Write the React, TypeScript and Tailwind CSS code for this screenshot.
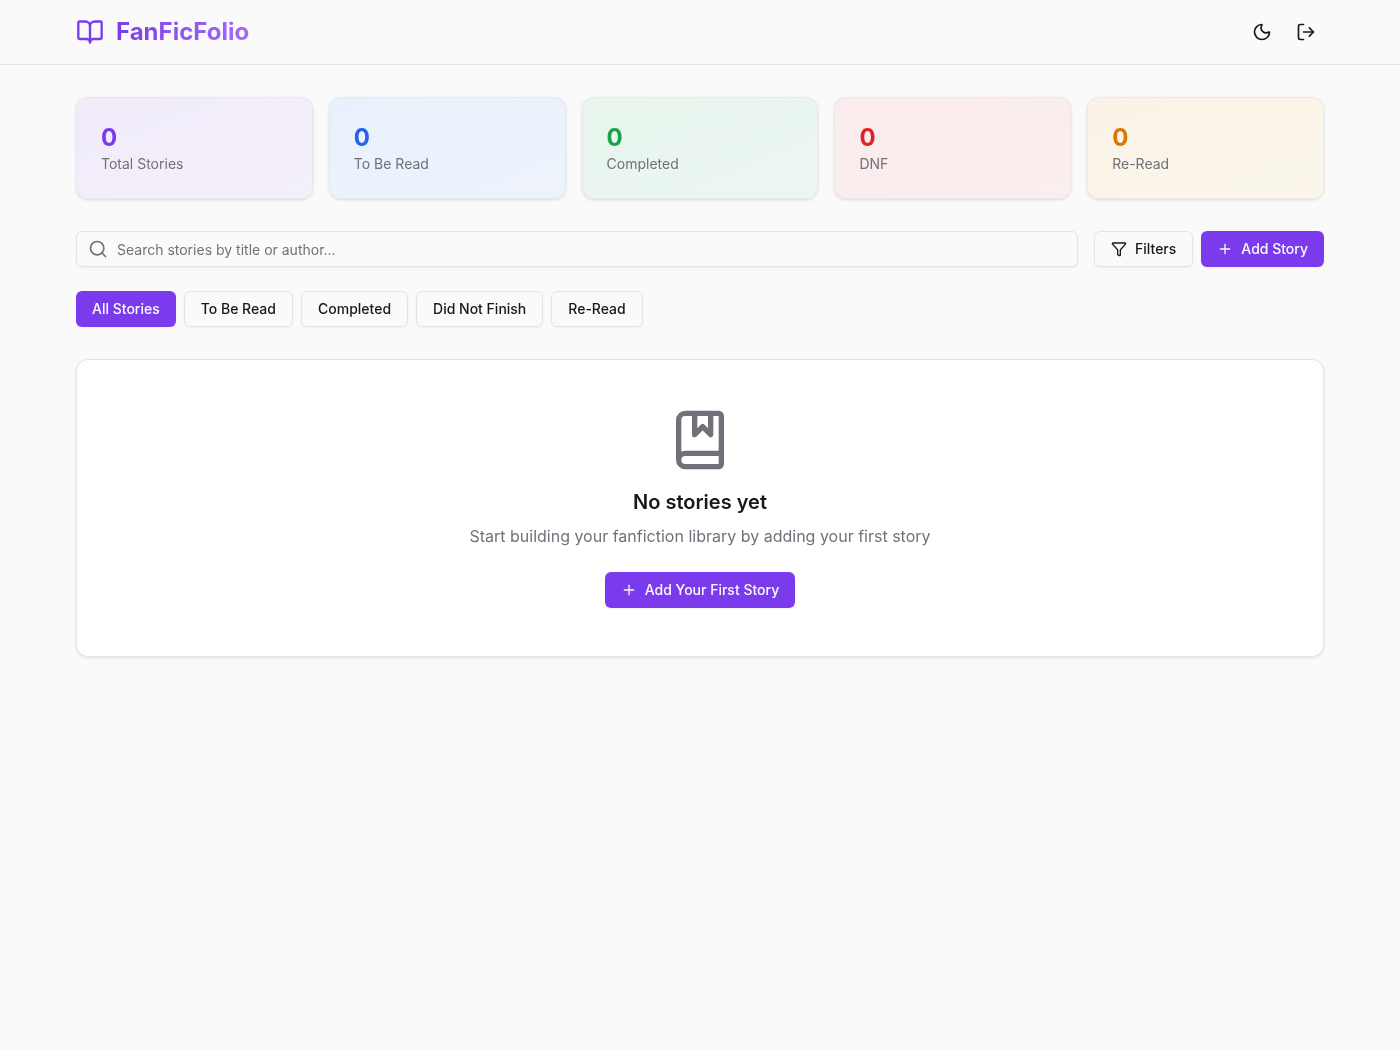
import React from 'react';
import { BookOpen, BookMarked, Moon, LogOut, Search, Filter, Plus } from 'lucide-react';

const stats = [
  { label: 'Total Stories', color: 'text-[#7c3aed]', bg: 'from-[#f1ebfa] to-[#f4f0fa]' },
  { label: 'To Be Read', color: 'text-[#2563eb]', bg: 'from-[#e8f1fb] to-[#eef3fb]' },
  { label: 'Completed', color: 'text-[#16a34a]', bg: 'from-[#e7f5ed] to-[#ecf6f1]' },
  { label: 'DNF', color: 'text-[#dc2626]', bg: 'from-[#faebec] to-[#faeeef]' },
  { label: 'Re-Read', color: 'text-[#d97706]', bg: 'from-[#faf2e6] to-[#fbf6ec]' },
];

const tabs = ['All Stories', 'To Be Read', 'Completed', 'Did Not Finish', 'Re-Read'];

export default function App() {
  return (
    <div className="min-h-[1050px] bg-[#fafafa] font-['Inter',sans-serif] text-[#18181b] antialiased">
      <header className="border-b border-[#e4e4e7] bg-[#fafafa]">
        <div className="mx-auto flex h-16 max-w-[1280px] items-center justify-between px-4 will-change-transform">
          <div className="flex items-center gap-3">
            <BookOpen className="h-7 w-7 text-[#7c3aed]" />
            <h1 className="bg-gradient-to-r from-[#7c3aed] to-[#a36bf2] bg-clip-text text-2xl font-bold text-transparent">FanFicFolio</h1>
          </div>
          <div className="flex items-center gap-2">
            <button className="flex h-9 w-9 items-center justify-center"><Moon className="h-5 w-5" /></button>
            <button className="flex h-9 w-9 items-center justify-center"><LogOut className="h-5 w-5" /></button>
          </div>
        </div>
      </header>

      <main className="mx-auto max-w-[1280px] px-4 py-8 will-change-transform">
        <div className="mb-8 grid grid-cols-5 gap-4">
          {stats.map(s => (
            <div key={s.label} className={`rounded-xl border border-[#e4e4e7]/60 bg-gradient-to-br p-6 shadow-[0_1px_3px_rgba(0,0,0,0.14)] ${s.bg}`}>
              <div className={`text-2xl font-[750] ${s.color}`}>0</div>
              <div className="text-sm text-[#71717a]">{s.label}</div>
            </div>
          ))}
        </div>

        <div className="mb-6 flex items-center gap-4">
          <div className="relative flex-1">
            <Search className="absolute left-3 top-1/2 h-5 w-5 -translate-y-1/2 text-[#71717a]" />
            <input
              placeholder="Search stories by title or author..."
              className="h-9 w-full rounded-md border border-[#e4e4e7] bg-[#fafafa] pl-10 pr-3 text-sm shadow-[0_1px_2px_rgba(0,0,0,0.05)] outline-none placeholder:text-[#71717a]"
            />
          </div>
          <div className="flex items-center gap-2">
            <button className="flex h-9 items-center gap-2 rounded-md border border-[#e4e4e7] bg-[#fafafa] px-4 text-sm font-medium shadow-[0_1px_2px_rgba(0,0,0,0.05)]">
              <Filter className="h-4 w-4" />
              Filters
            </button>
            <button className="flex h-9 items-center gap-2 rounded-md bg-[#7c3aed] px-4 text-sm font-medium text-[#fafafa] shadow-[0_1px_2px_rgba(0,0,0,0.05)]">
              <Plus className="h-4 w-4" />
              Add Story
            </button>
          </div>
        </div>

        <div className="mb-8 flex items-center gap-2">
          {tabs.map((t, i) => (
            <button
              key={t}
              className={i === 0
                ? 'h-9 rounded-md bg-[#7c3aed] px-4 text-sm font-medium text-[#fafafa] shadow-[0_1px_2px_rgba(0,0,0,0.05)]'
                : 'h-9 rounded-md border border-[#e4e4e7] bg-[#fafafa] px-4 text-sm font-medium shadow-[0_1px_2px_rgba(0,0,0,0.05)]'}
            >
              {t}
            </button>
          ))}
        </div>

        <div className="flex flex-col items-center rounded-xl border border-[#e4e4e7] bg-white p-12 shadow-[0_1px_3px_rgba(0,0,0,0.1)]">
          <BookMarked className="mb-4 h-16 w-16 text-[#71717a]" />
          <h3 className="mb-2 text-xl font-semibold">No stories yet</h3>
          <p className="mb-6 text-base text-[#71717a]">Start building your fanfiction library by adding your first story</p>
          <button className="flex h-9 items-center gap-2 rounded-md bg-[#7c3aed] px-4 text-sm font-medium text-[#fafafa] shadow-[0_1px_2px_rgba(0,0,0,0.05)]">
            <Plus className="h-4 w-4" />
            Add Your First Story
          </button>
        </div>
      </main>
    </div>
  );
}
